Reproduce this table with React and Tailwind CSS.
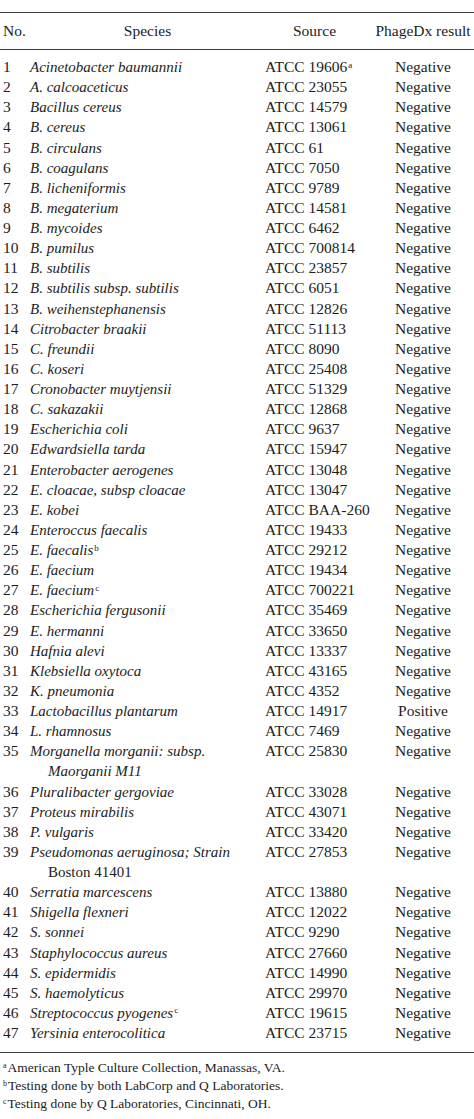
const rows = [
  { n: 1, sp: "Acinetobacter baumannii", src: "ATCC 19606", srcSup: "a" },
  { n: 2, sp: "A. calcoaceticus", src: "ATCC 23055" },
  { n: 3, sp: "Bacillus cereus", src: "ATCC 14579" },
  { n: 4, sp: "B. cereus", src: "ATCC 13061" },
  { n: 5, sp: "B. circulans", src: "ATCC 61" },
  { n: 6, sp: "B. coagulans", src: "ATCC 7050" },
  { n: 7, sp: "B. licheniformis", src: "ATCC 9789" },
  { n: 8, sp: "B. megaterium", src: "ATCC 14581" },
  { n: 9, sp: "B. mycoides", src: "ATCC 6462" },
  { n: 10, sp: "B. pumilus", src: "ATCC 700814" },
  { n: 11, sp: "B. subtilis", src: "ATCC 23857" },
  { n: 12, sp: "B. subtilis subsp. subtilis", src: "ATCC 6051" },
  { n: 13, sp: "B. weihenstephanensis", src: "ATCC 12826" },
  { n: 14, sp: "Citrobacter braakii", src: "ATCC 51113" },
  { n: 15, sp: "C. freundii", src: "ATCC 8090" },
  { n: 16, sp: "C. koseri", src: "ATCC 25408" },
  { n: 17, sp: "Cronobacter muytjensii", src: "ATCC 51329" },
  { n: 18, sp: "C. sakazakii", src: "ATCC 12868" },
  { n: 19, sp: "Escherichia coli", src: "ATCC 9637" },
  { n: 20, sp: "Edwardsiella tarda", src: "ATCC 15947" },
  { n: 21, sp: "Enterobacter aerogenes", src: "ATCC 13048" },
  { n: 22, sp: "E. cloacae, subsp cloacae", src: "ATCC 13047" },
  { n: 23, sp: "E. kobei", src: "ATCC BAA-260" },
  { n: 24, sp: "Enteroccus faecalis", src: "ATCC 19433" },
  { n: 25, sp: "E. faecalis", spSup: "b", src: "ATCC 29212" },
  { n: 26, sp: "E. faecium", src: "ATCC 19434" },
  { n: 27, sp: "E. faecium", spSup: "c", src: "ATCC 700221" },
  { n: 28, sp: "Escherichia fergusonii", src: "ATCC 35469" },
  { n: 29, sp: "E. hermanni", src: "ATCC 33650" },
  { n: 30, sp: "Hafnia alevi", src: "ATCC 13337" },
  { n: 31, sp: "Klebsiella oxytoca", src: "ATCC 43165" },
  { n: 32, sp: "K. pneumonia", src: "ATCC 4352" },
  { n: 33, sp: "Lactobacillus plantarum", src: "ATCC 14917", res: "Positive" },
  { n: 34, sp: "L. rhamnosus", src: "ATCC 7469" },
  { n: 35, sp: "Morganella morganii: subsp.", sp2: "Maorganii M11", sp2Italic: true, src: "ATCC 25830" },
  { n: 36, sp: "Pluralibacter gergoviae", src: "ATCC 33028" },
  { n: 37, sp: "Proteus mirabilis", src: "ATCC 43071" },
  { n: 38, sp: "P. vulgaris", src: "ATCC 33420" },
  { n: 39, sp: "Pseudomonas aeruginosa; Strain", sp2: "Boston 41401", src: "ATCC 27853" },
  { n: 40, sp: "Serratia marcescens", src: "ATCC 13880" },
  { n: 41, sp: "Shigella flexneri", src: "ATCC 12022" },
  { n: 42, sp: "S. sonnei", src: "ATCC 9290" },
  { n: 43, sp: "Staphylococcus aureus", src: "ATCC 27660" },
  { n: 44, sp: "S. epidermidis", src: "ATCC 14990" },
  { n: 45, sp: "S. haemolyticus", src: "ATCC 29970" },
  { n: 46, sp: "Streptococcus pyogenes", spSup: "c", src: "ATCC 19615" },
  { n: 47, sp: "Yersinia enterocolitica", src: "ATCC 23715" },
]

const notes = [
  { k: "a", text: "American Typle Culture Collection, Manassas, VA." },
  { k: "b", text: "Testing done by both LabCorp and Q Laboratories." },
  { k: "c", text: "Testing done by Q Laboratories, Cincinnati, OH." },
]

function Sup({ children }) {
  return <sup className="not-italic text-[9px] ml-[1px]">{children}</sup>
}

export default function App() {
  return (
    <div
      className="w-[474px] h-[1119px] bg-white text-[#1c1c1c] overflow-hidden"
      style={{ fontFamily: '"Liberation Serif", serif' }}
    >
      {/* caption, only its descenders show */}
      <div className="h-[12px] overflow-hidden">
        <div className="-mt-[18px] pl-[3px] text-[15px] leading-[20px] whitespace-nowrap">
          Table 3. Results of organism exclusivity
        </div>
      </div>

      <div className="border-t border-[#3a3a3a]">
        <div className="grid grid-cols-[27px_235px_107px_1fr] pl-[3px] h-[36px] items-center text-[15.5px]">
          <div>No.</div>
          <div className="text-center">Species</div>
          <div className="text-center pr-[8px]">Source</div>
          <div className="text-center whitespace-nowrap">PhageDx result</div>
        </div>
      </div>

      <div className="border-t border-[#3a3a3a] pt-[7px] pb-[9px]">
        {rows.map((r) => (
          <div
            key={r.n}
            className="grid grid-cols-[27px_235px_107px_1fr] pl-[3px] text-[15.5px] leading-[20.125px]"
          >
            <div>{r.n}</div>
            <div className="text-[15px]">
              <div className="italic whitespace-nowrap">
                {r.sp}
                {r.spSup && <Sup>{r.spSup}</Sup>}
              </div>
              {r.sp2 && (
                <div className={"pl-[18px] whitespace-nowrap " + (r.sp2Italic ? "italic" : "")}>{r.sp2}</div>
              )}
            </div>
            <div className="whitespace-nowrap">
              {r.src}
              {r.srcSup && <Sup>{r.srcSup}</Sup>}
            </div>
            <div className="text-center">{r.res ?? "Negative"}</div>
          </div>
        ))}
      </div>

      <div className="border-t border-[#3a3a3a] pt-[6px] pl-[3px] text-[13.5px] leading-[18px]">
        {notes.map((f) => (
          <div key={f.k} className="whitespace-nowrap">
            <sup className="text-[8px] mr-[1px]">{f.k}</sup>
            {f.text}
          </div>
        ))}
      </div>
    </div>
  )
}
